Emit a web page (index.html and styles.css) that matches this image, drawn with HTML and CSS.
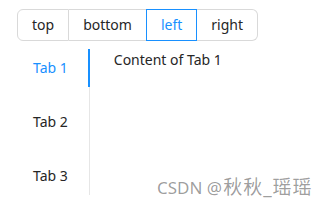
FILE: index.html
```html
<!DOCTYPE html>
<html lang="en">
  <head>
    <meta charset="UTF-8" />
    <meta name="viewport" content="width=device-width, initial-scale=1.0" />
    <title>Tabs position</title>
    <link rel="stylesheet" href="styles.css">
  </head>
  <body>
    <div class="demo">
      <div class="radio-group">
        <label class="radio-btn">top</label>
        <label class="radio-btn">bottom</label>
        <label class="radio-btn checked">left</label>
        <label class="radio-btn">right</label>
      </div>

      <div class="tabs">
        <div class="tabs-nav">
          <div class="tab active">Tab 1</div>
          <div class="tab">Tab 2</div>
          <div class="tab">Tab 3</div>
          <div class="ink-bar"></div>
        </div>
        <div class="tabs-content">Content of Tab 1</div>
      </div>
    </div>

    <div class="watermark">CSDN @<span class="wm-name">秋秋_瑶瑶</span></div>
  </body>
</html>
```

FILE: styles.css
```css
body {
  margin: 0;
  font-family: "Noto Sans", "Noto Sans CJK SC", sans-serif;
  font-size: 14px;
  color: #262626;
  background: #fff;
}

.demo {
  padding: 9px 0 0 9px;
}

.radio-group {
  display: inline-flex;
  margin-left: 8px;
  margin-bottom: 8px;
}

.radio-btn {
  height: 32px;
  line-height: 30px;
  padding: 0 14px;
  border: 1px solid #d9d9d9;
  border-left-width: 0;
  box-sizing: border-box;
  cursor: pointer;
}

.radio-btn:first-child {
  border-left-width: 1px;
  border-radius: 6px 0 0 6px;
}

.radio-btn:last-child {
  border-radius: 0 6px 6px 0;
}

.radio-btn.checked {
  color: #1890ff;
  border-color: #1890ff;
  box-shadow: -1px 0 0 #1890ff;
}

.tabs {
  display: flex;
}

.tabs-nav {
  position: relative;
  display: flex;
  flex-direction: column;
  gap: 16px;
  border-right: 1px solid #e6e6e6;
}

.tab {
  padding: 8px 21px 8px 24px;
  line-height: 22px;
  cursor: pointer;
}

.tab.active {
  color: #1890ff;
}

.ink-bar {
  position: absolute;
  top: 0;
  right: -1px;
  width: 2px;
  height: 38px;
  background: #1890ff;
}

.tabs-content {
  padding-left: 24px;
  line-height: 22px;
}

.watermark {
  position: absolute;
  left: 157px;
  top: 172px;
  font-size: 17px;
  color: rgba(0, 0, 0, 0.4);
}

.wm-name {
  margin-left: 1px;
  font-size: 19px;
  letter-spacing: 1px;
}
```
